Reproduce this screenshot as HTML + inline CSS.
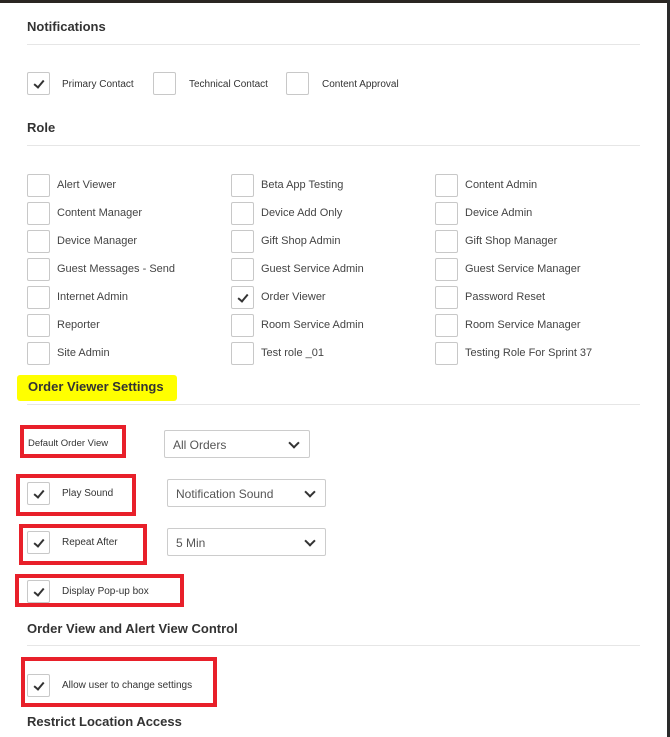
<!DOCTYPE html>
<html><head><style>
*{box-sizing:border-box;margin:0;padding:0}
body{width:670px;height:737px;background:#fff;position:relative;overflow:hidden;font-family:"Liberation Sans",sans-serif;color:#333}
.a{position:absolute}
.h{font-weight:bold;font-size:13px;color:#333}
.sep{height:1px;background:#e6e6e6;left:27px;width:613px}
.cb{width:23px;height:23px;border:1px solid #c8c8c8;border-radius:2px;background:#fff}
.cb.k::after{content:"";position:absolute;left:8px;top:5px;width:4px;height:8px;border:solid #333;border-width:0 2px 2px 0;transform:rotate(40deg)}
.t{font-size:11px;color:#444}
.s{font-size:10px;color:#333}
.red{border:4px solid #e8202a}
.sel{border:1px solid #ccc;border-radius:2px;font-size:12px;color:#555;padding:7px 0 0 8px}
.sel::after{content:"";position:absolute;right:11px;top:8px;width:6px;height:6px;border:solid #333;border-width:0 2px 2px 0;transform:rotate(45deg)}
</style></head><body>
<div class="a" style="left:0;top:0;width:670px;height:3px;background:#2a2622"></div>
<div class="a" style="right:0;top:0;width:3px;height:737px;background:#2a2a2a"></div>

<div class="a h" style="left:27px;top:19px">Notifications</div>
<div class="a sep" style="top:44px"></div>
<div class="a cb k" style="left:27px;top:72px"></div><div class="a s" style="left:62px;top:79px">Primary Contact</div>
<div class="a cb" style="left:153px;top:72px"></div><div class="a s" style="left:189px;top:79px">Technical Contact</div>
<div class="a cb" style="left:286px;top:72px"></div><div class="a s" style="left:322px;top:79px">Content Approval</div>

<div class="a h" style="left:27px;top:120px">Role</div>
<div class="a sep" style="top:145px"></div>

<div class="a cb" style="left:27px;top:174px"></div><div class="a t" style="left:57px;top:179px">Alert Viewer</div>
<div class="a cb" style="left:231px;top:174px"></div><div class="a t" style="left:261px;top:179px">Beta App Testing</div>
<div class="a cb" style="left:435px;top:174px"></div><div class="a t" style="left:465px;top:179px">Content Admin</div>
<div class="a cb" style="left:27px;top:202px"></div><div class="a t" style="left:57px;top:207px">Content Manager</div>
<div class="a cb" style="left:231px;top:202px"></div><div class="a t" style="left:261px;top:207px">Device Add Only</div>
<div class="a cb" style="left:435px;top:202px"></div><div class="a t" style="left:465px;top:207px">Device Admin</div>
<div class="a cb" style="left:27px;top:230px"></div><div class="a t" style="left:57px;top:235px">Device Manager</div>
<div class="a cb" style="left:231px;top:230px"></div><div class="a t" style="left:261px;top:235px">Gift Shop Admin</div>
<div class="a cb" style="left:435px;top:230px"></div><div class="a t" style="left:465px;top:235px">Gift Shop Manager</div>
<div class="a cb" style="left:27px;top:258px"></div><div class="a t" style="left:57px;top:263px">Guest Messages - Send</div>
<div class="a cb" style="left:231px;top:258px"></div><div class="a t" style="left:261px;top:263px">Guest Service Admin</div>
<div class="a cb" style="left:435px;top:258px"></div><div class="a t" style="left:465px;top:263px">Guest Service Manager</div>
<div class="a cb" style="left:27px;top:286px"></div><div class="a t" style="left:57px;top:291px">Internet Admin</div>
<div class="a cb k" style="left:231px;top:286px"></div><div class="a t" style="left:261px;top:291px">Order Viewer</div>
<div class="a cb" style="left:435px;top:286px"></div><div class="a t" style="left:465px;top:291px">Password Reset</div>
<div class="a cb" style="left:27px;top:314px"></div><div class="a t" style="left:57px;top:319px">Reporter</div>
<div class="a cb" style="left:231px;top:314px"></div><div class="a t" style="left:261px;top:319px">Room Service Admin</div>
<div class="a cb" style="left:435px;top:314px"></div><div class="a t" style="left:465px;top:319px">Room Service Manager</div>
<div class="a cb" style="left:27px;top:342px"></div><div class="a t" style="left:57px;top:347px">Site Admin</div>
<div class="a cb" style="left:231px;top:342px"></div><div class="a t" style="left:261px;top:347px">Test role _01</div>
<div class="a cb" style="left:435px;top:342px"></div><div class="a t" style="left:465px;top:347px">Testing Role For Sprint 37</div>

<div class="a" style="left:17px;top:375px;width:160px;height:26px;background:#ffff00;border-radius:3px"></div>
<div class="a h" style="left:28px;top:379px">Order Viewer Settings</div>
<div class="a sep" style="top:404px"></div>

<div class="a red" style="left:20px;top:425px;width:106px;height:33px"></div>
<div class="a s" style="left:28px;top:438px;font-size:9.5px">Default Order View</div>
<div class="a sel" style="left:164px;top:430px;width:146px;height:28px">All Orders</div>

<div class="a red" style="left:16px;top:474px;width:120px;height:42px"></div>
<div class="a cb k" style="left:27px;top:482px"></div><div class="a s" style="left:62px;top:488px">Play Sound</div>
<div class="a sel" style="left:167px;top:479px;width:159px;height:28px">Notification Sound</div>

<div class="a red" style="left:19px;top:524px;width:128px;height:41px"></div>
<div class="a cb k" style="left:27px;top:531px"></div><div class="a s" style="left:62px;top:537px">Repeat After</div>
<div class="a sel" style="left:167px;top:528px;width:159px;height:28px">5 Min</div>

<div class="a red" style="left:15px;top:574px;width:169px;height:33px"></div>
<div class="a cb k" style="left:27px;top:580px"></div><div class="a s" style="left:62px;top:586px">Display Pop-up box</div>

<div class="a h" style="left:27px;top:621px">Order View and Alert View Control</div>
<div class="a sep" style="top:645px"></div>

<div class="a red" style="left:21px;top:657px;width:196px;height:50px"></div>
<div class="a cb k" style="left:27px;top:674px"></div><div class="a s" style="left:62px;top:680px">Allow user to change settings</div>

<div class="a h" style="left:27px;top:714px">Restrict Location Access</div>
</body></html>
